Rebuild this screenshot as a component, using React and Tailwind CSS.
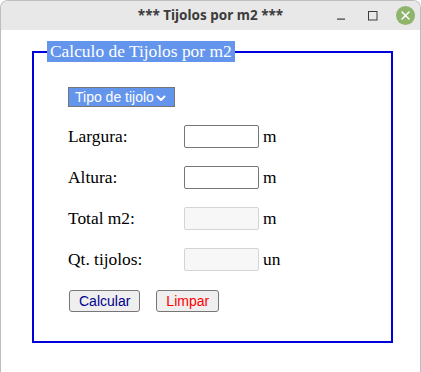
import React from 'react';

const serif = { fontFamily: '"Liberation Serif", "Times New Roman", serif' };
const sans = { fontFamily: '"Liberation Sans", Arial, sans-serif' };

function Row({ label, unit, disabled }) {
  return (
    <div className="flex items-center h-[23px]">
      <span className="w-[116px] text-[17.4px] text-black" style={serif}>{label}</span>
      <input
        type="text"
        disabled={disabled}
        className={
          disabled
            ? 'w-[75px] h-[23px] rounded-[2px] border border-[#d4d4d4] bg-[#f7f7f7] outline-none'
            : 'w-[75px] h-[23px] rounded-[2px] border border-[#767676] bg-white outline-none'
        }
      />
      <span className="ml-[4px] text-[17.4px] text-black" style={serif}>{unit}</span>
    </div>
  );
}

export default function App() {
  return (
    <div className="w-[421px] h-[372px] flex flex-col rounded-t-[8px] border border-b-0 border-[#bdbdbd] overflow-hidden bg-white">
      {/* title bar */}
      <div className="relative h-[29px] shrink-0 bg-[#e8e8e8] flex items-center justify-center">
        <span className="text-[13.5px] font-bold text-[#3c3c3c]" style={{ fontFamily: '"Noto Sans", "Open Sans", sans-serif' }}>
          *** Tijolos por m2 ***
        </span>
        <div className="absolute right-0 top-0 h-[29px] flex items-center">
          <svg width="10" height="10" viewBox="0 0 10 10" className="mr-[22px]">
            <rect x="1" y="7.5" width="8" height="1.2" fill="#3c3c3c" />
          </svg>
          <svg width="10" height="10" viewBox="0 0 10 10" className="mr-[18px]">
            <rect x="0.5" y="0.5" width="8.5" height="8.5" fill="none" stroke="#3c3c3c" strokeWidth="1" />
          </svg>
          <svg width="19" height="19" viewBox="0 0 19 19" className="mr-[5px]">
            <circle cx="9.5" cy="9.5" r="9.5" fill="#8fb46c" />
            <path d="M6 6 L13 13 M13 6 L6 13" stroke="#fff" strokeWidth="1.5" strokeLinecap="round" />
          </svg>
        </div>
      </div>

      {/* body */}
      <div className="flex-1">
        <fieldset className="mt-[11px] ml-[31px] w-[361px] h-[302px] border-2 border-[#0000dd] px-[13px] pt-0 pb-0">
          <legend className="bg-[#6495ed] text-white text-[17.4px] leading-[21px] px-[3px]" style={serif}>
            Calculo de Tijolos por m2
          </legend>
          <div className="pt-[25px] pl-[21px] flex flex-col gap-[18px]">
            <div className="flex">
              <div className="w-[107px] h-[20px] flex items-center border border-[#767676] bg-[#6495ed] text-white text-[14px] pl-[6px]" style={sans}>
                <span>Tipo de tijolo</span>
                <svg width="10" height="7" viewBox="0 0 10 7" className="ml-[2px] mt-[2px]">
                  <path d="M1.5 1.5 L5 5 L8.5 1.5" fill="none" stroke="#fff" strokeWidth="2" strokeLinecap="round" strokeLinejoin="round" />
                </svg>
              </div>
            </div>
            <Row label="Largura:" unit="m" />
            <Row label="Altura:" unit="m" />
            <Row label="Total m2:" unit="m" disabled />
            <Row label="Qt. tijolos:" unit="un" disabled />
            <div className="flex gap-[16px] mt-[1px] ml-[1px]">
              <button className="h-[22px] px-[9px] rounded-[3px] border border-[#767676] bg-[#efefef] text-[14px] leading-[18px] text-[#00008b]" style={sans}>
                Calcular
              </button>
              <button className="h-[22px] px-[9px] rounded-[3px] border border-[#767676] bg-[#efefef] text-[14px] leading-[18px] text-[#ff0000]" style={sans}>
                Limpar
              </button>
            </div>
          </div>
        </fieldset>
      </div>
    </div>
  );
}
